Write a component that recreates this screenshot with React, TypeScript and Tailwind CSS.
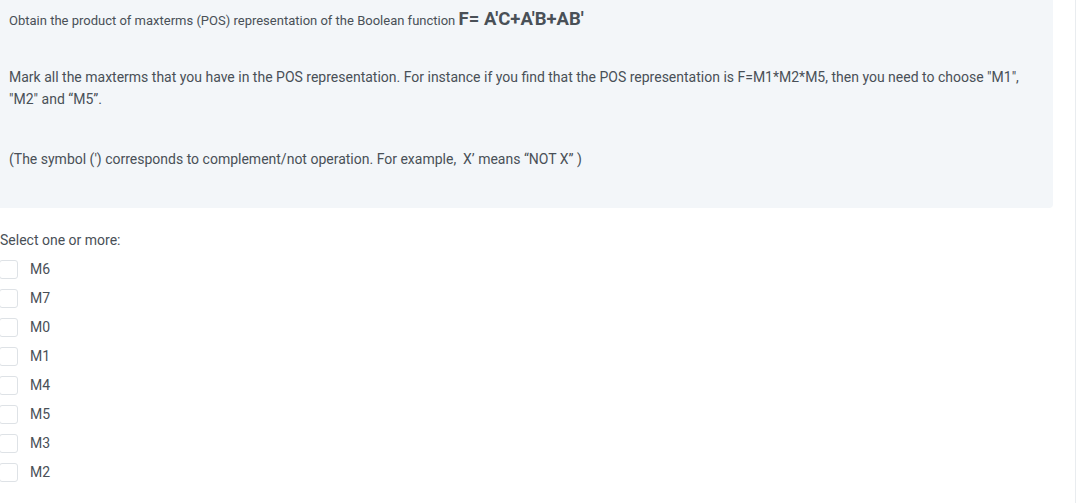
export default function App() {
  const options = ["M6", "M7", "M0", "M1", "M4", "M5", "M3", "M2"];

  return (
    <div
      className="relative w-[1077px] h-[503px] bg-white overflow-hidden text-[#495057]"
      style={{ fontFamily: "Roboto, 'Liberation Sans', sans-serif" }}
    >
      {/* Question text */}
      <div className="w-[1053px] h-[208px] bg-[#f3f6f9] rounded-br-[4px] px-[9px] pt-[8px]">
        <p className="text-[13px] leading-[22px]">
          Obtain the product of maxterms (POS) representation of the Boolean function{" "}
          <span className="text-[18.5px] font-bold">F= A'C+A'B+AB'</span>
        </p>
        <p className="mt-[34px] text-[14px] leading-[22px]">
          Mark all the maxterms that you have in the POS representation. For instance if you find that the POS
          representation is F=M1*M2*M5, then you need to choose "M1", "M2" and “M5”.
        </p>
        <p className="mt-[38px] text-[14px] leading-[22px]">
          (The symbol (') corresponds to complement/not operation. For example,&nbsp; X’ means “NOT X” )
        </p>
      </div>

      {/* Answers */}
      <div className="pt-[22px]">
        <p className="text-[14px] leading-[20px]">Select one or more:</p>
        <div className="mt-[10px] flex flex-col gap-[10px]">
          {options.map((o) => (
            <label key={o} className="flex items-center h-[19px]">
              <span className="-ml-[1px] w-[19px] h-[19px] rounded-[3px] border border-[#dee2e6] bg-white" />
              <span className="ml-[12px] text-[14px]">{o}</span>
            </label>
          ))}
        </div>
      </div>

      <div className="absolute top-0 right-[1px] w-px h-full bg-[#e9ecef]" />
    </div>
  );
}
